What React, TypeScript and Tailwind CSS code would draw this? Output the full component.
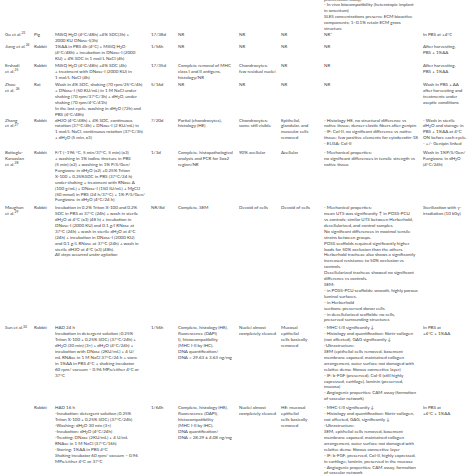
import React from 'react'

type Row = { pt: string; cells: string[][] }

// tiny markup: _{x} = subscript, ^{x} = superscript, leading * = italic line
function Line({ text }: { text: string }) {
  const italic = text.startsWith('*')
  const src = italic ? text.slice(1) : text
  const parts: React.ReactNode[] = []
  const re = /([_^])\{([^}]*)\}/g
  let last = 0
  let m: RegExpExecArray | null
  let i = 0
  while ((m = re.exec(src))) {
    if (m.index > last) parts.push(src.slice(last, m.index))
    parts.push(m[1] === '_' ? <sub key={i++}>{m[2]}</sub> : <sup key={i++}>{m[2]}</sup>)
    last = m.index + m[0].length
  }
  if (last < src.length) parts.push(src.slice(last))
  return <div className={`whitespace-nowrap ${italic ? 'italic' : ''}`}>{parts}</div>
}

const NR = ['NR']

const rows: Row[] = [
  {
    pt: 'pt-0',
    cells: [[], [], [], [], [], [], [],
      ['   proliferation assay)', '- In vivo biocompatibility (heterotopic implant', ' in omentum)', ' SLES concentrations preserve ECM bioactive', ' components; 1–0.1% retain ECM gross', ' structure'],
      []],
  },
  {
    pt: 'pt-[0.1px]',
    cells: [['Gu et al.^{23}'], ['Pig'], ['MilliQ H_{2}O (4°C/48h) +4% SDC(3h) +', '2000 KU DNase-I(3h)'], ['17/38d'], NR, NR, NR, ['NR*'], ['In PBS at +4°C']],
  },
  {
    pt: 'pt-[0.2px]',
    cells: [['Jiang et al.^{24}'], ['Rabbit'], ['1%AA in PBS 4h (4°C) + MilliQ H_{2}O', '(4°C/48h) + incubation in DNase-I (2000', 'KU) + 4% SDC in 1 mol/L NaCl (4h)'], ['1/56h'], NR, NR, NR, NR, ['After harvesting,', 'PBS + 1%AA']],
  },
  {
    pt: 'pt-[1.3px]',
    cells: [['Ershadi', 'et al.^{25}'], ['Rabbit'], ['MilliQ H_{2}O (4°C/48h) +4% SDC (4h)', '+ treatment with DNase-I (2000 KU) in', '1 mol/L NaCl (4h)'], ['17/35d'], ['Complete removal of MHC', 'class I and II antigens,', 'histology/NR'], ['Chondrocytes:', 'few residual nuclei'], NR, NR, ['After harvesting,', 'PBS + 1%AA']],
  },
  {
    pt: 'pt-[1.3px]',
    cells: [['Zhou', 'et al. ^{26}'], ['Rat'], ['Wash in 4% SDC, shaking (70 rpm/25°C/4h)', '+ DNase-I (50 KU/mL) in 1 M NaCl under', 'shaking (70 rpm/37°C/3h) + dH_{2}O, under', 'shaking (70 rpm/4°C/41h)', 'In the last cycle, washing in dH_{2}O (72h) and', 'PBS (4°C/48h)'], ['5/16d'], NR, NR, NR, NR, ['Wash in PBS + AA', 'after harvesting and', 'treatments under', 'aseptic conditions']],
  },
  {
    pt: 'pt-0',
    cells: [['Zhang', 'et al.^{27}'], ['Rabbit'], ['dH_{2}O (4°C/48h) + 4% SDC, continuous', 'rotation (37°C/4h) + DNase-I (2 KU/mL) in', '1 mol/L NaCl, continuous rotation (37°C/3h)', '+ dH_{2}O (5 min, x3)'], ['7/20d'], ['Partial (chondrocytes),', 'histology (HE)'], ['Chondrocytes:', 'some still visible'], ['Epithelial,', 'glandular, and', 'muscular cells', 'removed'],
      ['- Histology HE, no structural difference vs', 'native tissue; denser elastic fibers after genipin', '- IF: Col-II, no significant difference vs native', 'tissue; few positive elements for cytokeratin-18', '- ELISA: Col-II'],
      ['- Wash in sterile', 'dH_{2}O and storage in', 'PBS + 1%AA at 4°C', 'ON before each cycle.', '- +/- Genipin linked']],
  },
  {
    pt: 'pt-[3.1px]',
    cells: [['Batioglu-', 'Karaaslan', 'et al.^{28}'], ['Rabbit'],
      ['F/T (−196 °C, 5 min/37°C, 5 min) (x3)', '+ washing in 1% iodine tincture in PBS', '(5 min) (x2) + washing in 1% P/S/Gen/', 'Fungizone in dH_{2}O (x2) +0.25% Triton', 'X-100 + 0.25%SDC in PBS (37°C/24 h)', 'under shaking + treatment with RNase A', '(100 g/mL) + DNase-I (150 IU/mL) + MgCl_{2}', '(50 mmol) in PBS (24 h/37°C) + 1% P/S/Gen/', 'Fungizone in dH_{2}O (4°C/24 h)'],
      ['1/3d'], ['Complete, histopathological', 'analysis and PCR for Sox2', 'region/NR'], ['90% acellular'], ['Acellular'],
      ['- Mechanical properties:', 'no significant differences in tensile strength vs', 'native tissue'],
      ['Wash in 1%P/S/Gen/', 'Fungizone in dH_{2}O', '(4°C/24h)']],
  },
  {
    pt: 'pt-[1.9px]',
    cells: [['Maughan', 'et al.^{29}'], ['Rabbit'],
      ['Incubation in 0.2% Triton X-100 and 0.2%', 'SDC in PBS at 37°C (24h) +  wash in sterile', 'dH_{2}O at 4°C (x3) (48 h) + incubation in', 'DNase-I (2000 KU) and 0.1 g/l RNase at', '37°C (24h) + wash in sterile dH_{2}O at 4°C', '(24h) + incubation in DNase-I (2000 KU)', 'and 0.1 g/L RNase at 37°C (24h) + wash in', 'sterile dH_{2}O at 4°C (x3) (48h).', '*All steps occurred under agitation'],
      ['NR/8d'], ['Complete, SEM'], ['Devoid of cells'], ['Devoid of cells'],
      ['- Mechanical properties:', 'mean UTS was significantly ↑ in POSS-PCU', 'vs controls; similar UTS between Herberhold,', 'decellularized, and control samples.', 'No significant differences in maximal tensile', 'strains between groups.', 'POSS scaffolds required significantly higher', 'loads for 50% occlusion than the others.', 'Herberhold tracheae also shows a significantly', 'increased resistance to 50% occlusion vs', 'controls.', 'Decellularized tracheae showed no significant', 'difference vs controls.', 'SEM:', '- in POSS-PCU scaffolds: smooth, highly porous', 'luminal surfaces.', '- in Herberhold', 'sections: preserved donor cells', '- in decellularized scaffolds: no cells,', 'preserved surrounding structures'],
      ['Sterilization with γ-', 'irradiation (10 kGy)']],
  },
  {
    pt: 'pt-[2px]',
    cells: [['Sun et al.^{30}'], ['Rabbit'],
      ['HAD 24 h', 'Incubation in detergent solution [0.25%', 'Triton X-100 + 0.25% SDC] (37°C/24h) +', 'dH_{2}O (30 min) (3×) + dH_{2}O (4°C/24h) +', 'incubation with DNase (2KU/mL) + 4 U/', 'mL RNAse in 1 M NaCl 37°C/24 h + store', 'in 1%AA in PBS 4°C + shaking incubator', '60 rpm/ vacuum − 0.96 MPa/either 4°C or', '37°C'],
      ['1/56h'], ['Complete, histology (HE),', 'fluorescence (DAPI)', 'I), histocompatibility', '(MHC I-II by IHC),', 'DNA quantification/', 'DNA = 29.63 ± 3.63 ng/mg'], ['Nuclei almost', 'completely cleared'], ['Mucosal', 'epithelial', 'cells basically', 'removed'],
      ['- MHC-I/II significantly ↓', '- Histology and quantification: fibrin-collagen', '(not affected), GAG significantly ↓', '-Ultrastructure:', 'SEM (epithelial cells removed, basement', 'membrane exposed, maintained collagen', 'arrangement, outer surface not damaged with', 'relative dense fibrous connective layer)', '- IF: b-FGF (preserved), Col-II (still highly', 'expressed, cartilage), laminin (preserved,', 'mucosa)', '- Angiogenic properties: CAM assay (formation', 'of vascular network)'],
      ['In PBS at', '+4°C + 1%AA']],
  },
  {
    pt: 'pt-[3.3px]',
    cells: [[], ['Rabbit'],
      ['HAD 16 h', '-Incubation: detergent solution [0.25%', 'Triton X-100 + 0.25% SDC] (37°C/24h)', '-Washing: dH_{2}O 30 min (3×)', '-Incubation: dH_{2}O (4°C/24h)', '-Treating: DNase (2KU/mL) + 4 U/mL', 'RNAse in 1 M NaCl (37°C/16h)', '-Storing: 1%AA in PBS 4°C', 'Shaking incubator 60 rpm/ vacuum − 0.96', 'MPa/either 4°C or 37°C'],
      ['1/64h'], ['Complete, histology (HE),', 'fluorescence (DAPI),', 'histocompatibility', '(MHC I-II by IHC),', 'DNA quantification/', 'DNA = 28.29 ± 4.08 ng/mg'], ['Nuclei almost', 'completely cleared'], ['HE: mucosal', 'epithelial', 'cells basically', 'removed'],
      ['- MHC-I/II significantly ↓', '- Histology and quantification: fibrin-collagen,', 'not affected, GAG, significantly ↓', '-Ultrastructure:', 'SEM, epithelial cells removed, basement', 'membrane exposed, maintained collagen', 'arrangement, outer surface not damaged with', 'relative dense fibrous connective layer', '- IF: b-FGF, preserved, Col-II, highly expressed,', 'in cartilage; laminin, preserved in the mucosa', '- Angiogenic properties: CAM assay, formation', 'of vascular network'],
      ['In PBS at', '+4°C + 1%AA']],
  },
]

export default function App() {
  return (
    <div className="h-[474px] w-[474px] overflow-hidden bg-white">
      <div
        className="-mt-[3.45px] pl-[5px] text-[4.5px] leading-[5.9px] text-[#404040]"
        style={{ fontFamily: 'Lato, "Liberation Sans", sans-serif' }}
      >
        {rows.map((r, ri) => (
          <div
            key={ri}
            className={`grid grid-cols-[29px_21px_96px_27px_61px_42px_43px_99px_1fr] ${r.pt}`}
          >
            {r.cells.map((c, ci) => (
              <div key={ci}>
                {c.map((l, li) => (
                  <Line key={li} text={l} />
                ))}
              </div>
            ))}
          </div>
        ))}
      </div>
    </div>
  )
}
